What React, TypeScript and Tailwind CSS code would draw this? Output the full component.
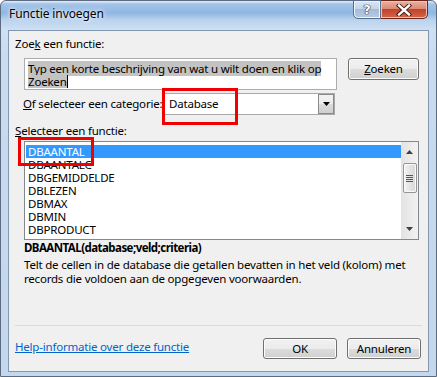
import React from "react";

const btn =
  "flex items-center justify-center rounded-[3px] border border-[#707070] bg-[linear-gradient(to_bottom,#f2f2f2_0%,#ebebeb_50%,#dddddd_50%,#cfcfcf_100%)] shadow-[inset_0_0_0_1px_#fcfcfc] text-[11.5px] tracking-[-0.2px] text-black";

function ScrollBar() {
  return (
    <div className="flex h-full w-[17px] flex-col items-center bg-[linear-gradient(to_right,#e3e3e3,#f2f2f2)]">
      <div className="flex h-[17px] w-full items-center justify-center pt-[2px]">
        <svg width="7" height="4" viewBox="0 0 7 4">
          <path d="M3.5 0 L7 4 L0 4 Z" fill="#404040" />
        </svg>
      </div>
      <div className="mt-[4px] flex h-[30px] w-[14px] items-center justify-center rounded-[2px] border border-[#969696] bg-[linear-gradient(to_right,#f4f4f4,#e4e4e4_50%,#d8d8d8)] shadow-[inset_0_0_0_1px_#fafafa]">
        <div className="flex flex-col gap-[1px]">
          <div className="h-[1px] w-[7px] bg-[#555]" />
          <div className="h-[1px] w-[7px] bg-[#555]" />
          <div className="h-[1px] w-[7px] bg-[#555]" />
          <div className="h-[1px] w-[7px] bg-[#555]" />
        </div>
      </div>
      <div className="flex-1" />
      <div className="flex h-[17px] w-full items-center justify-center pb-[4px]">
        <svg width="7" height="4" viewBox="0 0 7 4">
          <path d="M0 0 L7 0 L3.5 4 Z" fill="#404040" />
        </svg>
      </div>
    </div>
  );
}

export default function App() {
  const items = [
    "DBAANTAL",
    "DBAANTALC",
    "DBGEMIDDELDE",
    "DBLEZEN",
    "DBMAX",
    "DBMIN",
    "DBPRODUCT",
  ];
  return (
    <div className="h-[377px] w-[437px] bg-white font-['Segoe_UI','Noto_Sans',sans-serif] text-[11.5px] tracking-[-0.2px] text-black">
      <div className="relative flex h-[377px] w-[437px] flex-col rounded-t-[6px] border border-[#5d6b80] bg-[linear-gradient(to_bottom,#e6eef8_0px,#a4c4e8_3px,#8fb6e2_12px,#bad3ee_19px,#cfe0f3_29px,#c8dbef_60px,#c3d7ed_100%)]">
        {/* title bar */}
        <div className="flex h-[29px] items-start">
          <div className="ml-[8px] mt-[5px] h-[16px] text-[12px] leading-[16px] tracking-[-0.1px] text-black [text-shadow:0_0_6px_#ffffff,0_0_3px_#ffffff]">
            Functie invoegen
          </div>
          <div className="flex-1" />
          <div className="-mt-[1px] mr-[8px] flex h-[19px]">
            <div className="flex h-[19px] w-[28px] items-center justify-center rounded-bl-[5px] border border-[#5a6e8c] bg-[linear-gradient(to_bottom,#dbe6f3_0%,#c4d5e9_45%,#a3bcd9_50%,#b7cbe2_100%)] shadow-[inset_0_0_0_1px_#eef4fb]">
              <span className="font-['DejaVu_Sans',sans-serif] text-[13px] font-bold leading-none text-white [text-shadow:0_0_1px_#223,0_0_1px_#223,0_0_1px_#223]">
                ?
              </span>
            </div>
            <div className="flex h-[19px] w-[47px] items-center justify-center rounded-br-[5px] border border-l-0 border-[#6b2418] bg-[linear-gradient(to_bottom,#eab2a4_0%,#dc8a74_45%,#c2432a_50%,#d2664a_100%)] shadow-[inset_0_0_0_1px_#f2c2b6]">
              <svg width="16" height="12" viewBox="0 0 16 12">
                <path
                  d="M3 1.5 L13 10.5 M13 1.5 L3 10.5"
                  stroke="#3b1610"
                  strokeWidth="4.2"
                  strokeLinecap="square"
                />
                <path
                  d="M3 1.5 L13 10.5 M13 1.5 L3 10.5"
                  stroke="#ffffff"
                  strokeWidth="2.4"
                  strokeLinecap="square"
                />
              </svg>
            </div>
          </div>
        </div>

        {/* client area */}
        <div className="relative ml-[7px] flex h-[342px] w-[421px] flex-col border border-[#8397b1] bg-[#f0f0f0]">
          <div className="ml-[6px] mt-[5px] h-[15px] leading-[15px]">
            Zoe<span className="underline">k</span> een functie:
          </div>
          <div className="mt-[7px] flex items-start">
            <div className="ml-[15px] h-[32px] w-[313px] border border-[#abadb3] bg-white pl-[3px] pt-[3px] leading-[13px]">
              <div className="whitespace-nowrap">
                <span className="bg-[#c3c3c3]">Typ een korte beschrijving van wat u wilt doen en klik op</span>
              </div>
              <div className="flex items-center whitespace-nowrap">
                <span className="bg-[#c3c3c3]">Zoeken</span>
                <span className="h-[13px] w-[1px] bg-black" />
              </div>
            </div>
            <button className={btn + " ml-[11px] h-[22px] w-[71px] border-[#3c7fb1] shadow-[inset_0_0_0_1px_#96d9f9]"}>
              <span>
                <span className="underline">Z</span>oeken
              </span>
            </button>
          </div>
          <div className="mt-[3px] flex h-[22px] items-center">
            <div className="ml-[14px] w-[139px] whitespace-nowrap">
              <span className="underline">O</span>f selecteer een categorie:
            </div>
            <div className="flex h-[22px] w-[173px] items-center border border-[#a9a9a9] bg-white">
              <div className="flex-1 pl-[6px]">Database</div>
              <div className="flex h-[20px] w-[16px] items-center justify-center border border-[#8a8a8a] bg-[linear-gradient(to_bottom,#f2f2f2_0%,#ebebeb_50%,#dddddd_50%,#cfcfcf_100%)]">
                <svg width="7" height="4" viewBox="0 0 7 4">
                  <path d="M0 0 L7 0 L3.5 4 Z" fill="#000" />
                </svg>
              </div>
            </div>
          </div>
          <div className="ml-[6px] mt-[8px] h-[15px] leading-[15px]">
            <span className="underline">S</span>electeer een functie:
          </div>
          <div className="ml-[15px] mt-[3px] flex h-[99px] w-[395px] border border-[#828790] bg-white">
            <div className="flex-1 pl-[1px] pt-[3px]">
              {items.map((it, i) => (
                <div
                  key={it}
                  className={
                    "h-[13px] overflow-hidden pl-[2px] leading-[13px] " +
                    (i === 0 ? "bg-[#3399ff] text-white" : "")
                  }
                >
                  {it}
                </div>
              ))}
            </div>
            <ScrollBar />
          </div>
          <div className="ml-[15px] h-[15px] font-bold leading-[15px] tracking-[-0.55px]">
            DBAANTAL(database;veld;criteria)
          </div>
          <div className="ml-[15px] mt-[3px] leading-[14px]">
            <div className="whitespace-nowrap">
              Telt de cellen in de database die getallen bevatten in het veld (kolom) met
            </div>
            <div className="whitespace-nowrap">records die voldoen aan de opgegeven voorwaarden.</div>
          </div>
          <div className="ml-[6px] mt-[39px] h-[1px] w-[407px] bg-[#d5dbe1]" />
          <div className="mt-[12px] flex items-start">
            <a className="ml-[6px] mt-[1px] flex-1 leading-[15px] text-[#0066cc] underline" href="#">
              Help-informatie over deze functie
            </a>
            <button className={btn + " h-[21px] w-[74px]"}>OK</button>
            <button className={btn + " ml-[10px] mr-[7px] h-[21px] w-[74px]"}>Annuleren</button>
          </div>

          {/* red highlight rectangles */}
          <div className="absolute left-[153px] top-[57px] h-[37px] w-[76px] border-[3px] border-[#f00000]" />
          <div className="absolute left-[9px] top-[106px] h-[29px] w-[76px] border-[3px] border-[#f00000]" />
        </div>
      </div>
    </div>
  );
}
